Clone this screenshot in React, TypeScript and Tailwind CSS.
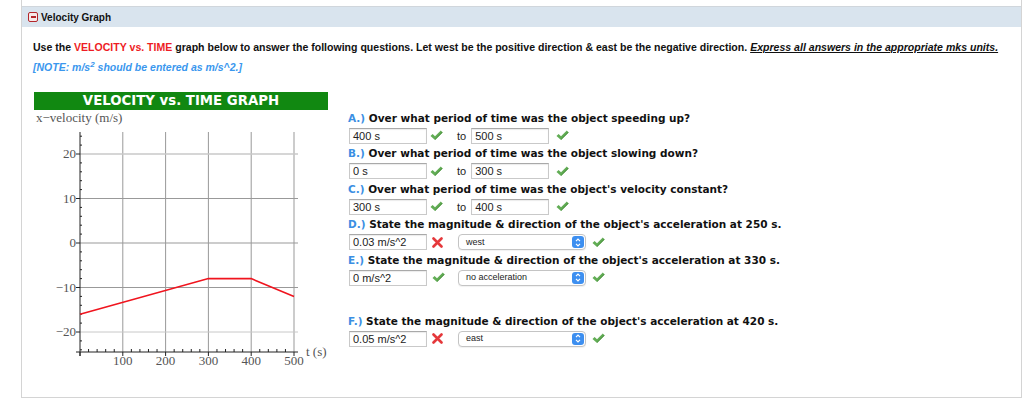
import React from "react"

const Check = () => (
	<svg width="13" height="11" viewBox="0 0 13 11" className="shrink-0">
		<path d="M0.5 6 L2.6 4 L5 6.3 L10.8 0.6 L12.6 2.4 L5 10 Z" fill="#62ad55" />
		<path d="M5 10 L12.6 2.4 L12 1.8 L5 9 Z" fill="#4e9442" />
	</svg>
)

const Cross = () => (
	<svg width="11" height="11" viewBox="0 0 11 11" className="shrink-0">
		<path d="M1.5 1.5 L9.5 9.5 M9.5 1.5 L1.5 9.5" stroke="#e5383b" strokeWidth="2.6" strokeLinecap="round" />
	</svg>
)

const TextBox = ({ value }: { value: string }) => (
	<div className="w-[78px] h-[16px] border border-[#c9c9c9] border-t-[#a9a9a9] bg-white px-[3px] text-[11px] leading-[14px] text-[#222] font-['Liberation_Sans',Arial,sans-serif] shadow-[inset_0_1px_1px_rgba(0,0,0,0.08)]">
		{value}
	</div>
)

const Select = ({ value }: { value: string }) => (
	<div className="flex h-[16px] w-[128px] items-center justify-between rounded-[4px] border border-[#c4c4c4] bg-white pl-[7px] pr-[1px] shadow-[0_1px_1px_rgba(0,0,0,0.06)]">
		<span className="text-[9px] text-[#222] font-['Liberation_Sans',Arial,sans-serif]">{value}</span>
		<span className="flex h-[12px] w-[12px] items-center justify-center rounded-[3px] bg-[#3d8ff0]">
			<svg width="6" height="9" viewBox="0 0 6 9">
				<path d="M1 3.2 L3 1.2 L5 3.2 M1 5.8 L3 7.8 L5 5.8" stroke="white" strokeWidth="1.2" fill="none" />
			</svg>
		</span>
	</div>
)

const Question = ({ letter, text, children }: { letter: string; text: string; children: React.ReactNode }) => (
	<div className="flex flex-col">
		<div className="h-[17px] leading-[17px] text-[10.5px] font-bold text-[#111] font-['DejaVu_Sans',Verdana,sans-serif] whitespace-nowrap">
			<span className="text-[#3b8fe3]">{letter}.)</span> {text}
		</div>
		<div className="flex h-[18.5px] items-center pl-[1px]">{children}</div>
	</div>
)

const RangeRow = ({ from, to }: { from: string; to: string }) => (
	<>
		<TextBox value={from} />
		<span className="ml-[3px] w-[13px]">
			<Check />
		</span>
		<span className="ml-[14px] text-[11px] text-[#222] font-['Liberation_Sans',Arial,sans-serif]">to</span>
		<span className="ml-[5px]">
			<TextBox value={to} />
		</span>
		<span className="ml-[7px]">
			<Check />
		</span>
	</>
)

const AccelRow = ({ value, ok, dir }: { value: string; ok: boolean; dir: string }) => (
	<>
		<TextBox value={value} />
		<span className="ml-[5px] w-[13px]">{ok ? <Check /> : <Cross />}</span>
		<span className="ml-[13px]">
			<Select value={dir} />
		</span>
		<span className="ml-[6px]">
			<Check />
		</span>
	</>
)

// chart helpers
const tx = (t: number) => 46 + t * 0.428
const vy = (v: number) => 133 - v * 4.45
const serif = "'Liberation Serif', 'DejaVu Serif', serif"

function Graph() {
	const majors = [100, 200, 300, 400, 500]
	const hLines = [20, 10, 0, -10, -20]
	const minorT = Array.from({ length: 26 }, (_, i) => i * 20)
	const minorV = Array.from({ length: 25 }, (_, i) => -24 + i * 2)
	const pts = [
		[0, -16],
		[300, -8],
		[400, -8],
		[500, -12],
	]
	return (
		<svg width="300" height="262" viewBox="0 0 300 262" className="block">
			<text x="2" y="12" fontSize="13" fill="#555" fontFamily={serif}>
				x−velocity (m/s)
			</text>
			{majors.map((t) => (
				<line key={t} x1={tx(t)} y1="22" x2={tx(t)} y2="242" stroke="#999" strokeWidth="1" />
			))}
			{hLines.map((v) => (
				<line
					key={v}
					x1="46"
					y1={vy(v)}
					x2="264"
					y2={vy(v)}
					stroke={v === 20 || v === -20 ? "#c8c8c8" : "#999"}
					strokeWidth={v === 20 ? 1.5 : 1}
				/>
			))}
			{/* axes */}
			<line x1="46" y1="22" x2="46" y2="246" stroke="#222" strokeWidth="1" />
			<line x1="42" y1="242" x2="264" y2="242" stroke="#222" strokeWidth="1" />
			{minorV.map((v) => (
				<line key={v} x1="46" y1={vy(v)} x2={v % 10 === 0 ? 42 : 48} y2={vy(v)} stroke="#222" strokeWidth="1" />
			))}
			{minorT.map((t) => (
				<line key={t} x1={tx(t)} y1="242" x2={tx(t)} y2={t % 100 === 0 ? 246 : 239} stroke="#222" strokeWidth="1" />
			))}
			<polyline
				points={pts.map(([t, v]) => `${tx(t)},${vy(v)}`).join(" ")}
				fill="none"
				stroke="#f0141e"
				strokeWidth="1.6"
			/>
			{hLines.map((v) => (
				<text key={v} x="42" y={vy(v) + 4} textAnchor="end" fontSize="13" fill="#555" fontFamily={serif}>
					{v < 0 ? `−${-v}` : v}
				</text>
			))}
			{majors.map((t) => (
				<text key={t} x={tx(t)} y="255" textAnchor="middle" fontSize="13" fill="#555" fontFamily={serif}>
					{t}
				</text>
			))}
			<text x="272" y="246" fontSize="13" fill="#555" fontFamily={serif}>
				t (s)
			</text>
		</svg>
	)
}

export default function App() {
	return (
		<div className="h-[417px] w-[1024px] overflow-hidden bg-white">
			<div className="ml-[21px] h-[398px] w-[1001px] border-x border-b border-[#d4d4d4] pt-[6px]">
				<div className="flex h-[21px] items-center gap-[3px] border-t border-[#d0d6dc] bg-[#d9e4ee] pl-[6px]">
					<span className="flex h-[10px] w-[10px] items-center justify-center rounded-[2px] border border-[#b3262b] bg-[#f6e9e9]">
						<span className="h-[1.5px] w-[5px] bg-[#b3262b]" />
					</span>
					<span className="text-[10px] font-bold text-[#111] font-['Liberation_Sans',Arial,sans-serif]">Velocity Graph</span>
				</div>

				<div className="pl-[11px] pt-[11px] font-['Liberation_Sans',Arial,sans-serif]">
					<p className="h-[18px] text-[10.55px] font-bold leading-[18px] text-[#111] whitespace-nowrap">
						Use the <span className="text-[#ee1c25]">VELOCITY vs. TIME</span> graph below to answer the following questions. Let west be the
						positive direction &amp; east be the negative direction.{" "}
						<em className="underline">Express all answers in the appropriate mks units.</em>
					</p>
					<p className="mt-[2px] h-[18px] text-[10.5px] font-bold italic leading-[18px] text-[#3a97ee]">
						[NOTE: m/s<sup className="text-[8px]">2</sup> should be entered as m/s^2.]
					</p>
				</div>

				<div className="mt-[16px] flex pl-[12px]">
					<div className="flex w-[300px] flex-col">
						<div className="h-[18px] w-[294px] bg-[#118811] text-center text-[13.3px] font-bold leading-[18px] text-white font-['DejaVu_Sans',Verdana,sans-serif]">
							VELOCITY vs. TIME GRAPH
						</div>
						<Graph />
					</div>
					<div className="ml-[14px] flex flex-col pt-[17.5px]">
						<Question letter="A" text="Over what period of time was the object speeding up?">
							<RangeRow from="400 s" to="500 s" />
						</Question>
						<Question letter="B" text="Over what period of time was the object slowing down?">
							<RangeRow from="0 s" to="300 s" />
						</Question>
						<Question letter="C" text="Over what period of time was the object's velocity constant?">
							<RangeRow from="300 s" to="400 s" />
						</Question>
						<Question letter="D" text="State the magnitude & direction of the object's acceleration at 250 s.">
							<AccelRow value="0.03 m/s^2" ok={false} dir="west" />
						</Question>
						<Question letter="E" text="State the magnitude & direction of the object's acceleration at 330 s.">
							<AccelRow value="0 m/s^2" ok={true} dir="no acceleration" />
						</Question>
						<div className="h-[25.5px]" />
						<Question letter="F" text="State the magnitude & direction of the object's acceleration at 420 s.">
							<AccelRow value="0.05 m/s^2" ok={false} dir="east" />
						</Question>
					</div>
				</div>
			</div>
		</div>
	)
}
